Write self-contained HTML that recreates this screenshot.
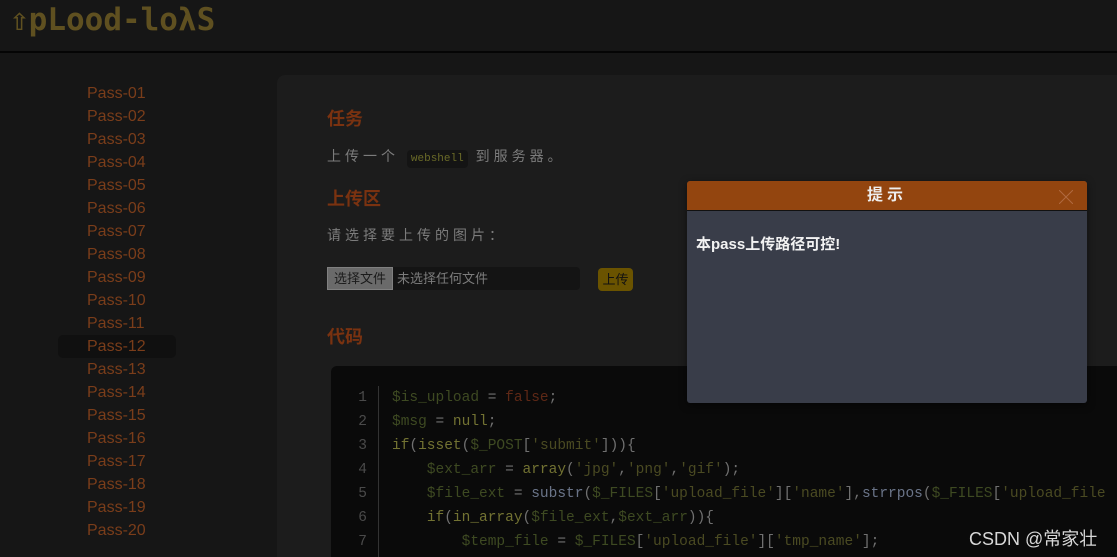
<!DOCTYPE html>
<html><head><meta charset="utf-8"><style>
*{margin:0;padding:0;box-sizing:border-box}
html,body{width:1117px;height:557px;overflow:hidden}
body{background:#161616;font-family:"Liberation Sans","Noto Sans CJK SC",sans-serif;position:relative}
.hdr{position:absolute;left:0;top:0;width:1117px;height:53px;background:#161616;border-bottom:2px solid #050505}
.logo{position:absolute;left:10px;top:2px;font:bold 31px "DejaVu Sans Mono",monospace;color:#5f5020;letter-spacing:0px}
.nav{position:absolute;left:58px;top:82px;width:118px}
.nav div{height:23px;line-height:23px;padding-left:29px;font-size:16px;color:#7a3d1a}
.nav div.on{background:#101010;border-radius:5px}
.main{position:absolute;left:277px;top:75px;width:850px;height:482px;background:#1c1c1c;border-radius:8px 0 0 0}
h3{position:absolute;left:327px;font-size:18px;font-weight:bold;color:#7a3210}
.t{position:absolute;left:327px;font-size:14px;color:#7c7c7c;letter-spacing:4px}
code.w{font:11px "Liberation Mono",monospace;color:#6a6a28;background:#141414;padding:3px 4px;border-radius:4px;letter-spacing:0}
.file{position:absolute;left:327px;top:267px;width:253px;height:23px;background:#141414;border-radius:4px;font-size:13px;color:#7c7c7c;line-height:23px}
.file span{display:inline-block;background:#6a6a6a;color:#1a1a1a;border:1px solid #808080;height:23px;line-height:21px;padding:0 6px;margin-right:4px;vertical-align:top}
.up{position:absolute;left:598px;top:268px;width:35px;height:23px;background:#6a5300;border-radius:4px;color:#111;font-size:13px;line-height:23px;text-align:center}
.code{position:absolute;left:331px;top:366px;width:800px;height:200px;background:#0a0a0a;border-radius:6px}
.ln{position:absolute;left:349px;top:386px;width:30px;border-right:1px solid #333;font:14.5px/24px "Liberation Mono",monospace;color:#4a4a4a;text-align:right;padding-right:11px;height:180px}
pre{position:absolute;left:392px;top:386px;font:14.5px/24px "Liberation Mono",monospace;color:#3e4a22;white-space:pre}
.k{color:#727232}.f{color:#5e2816}.s{color:#4a4a22}.p{color:#707070}.b{color:#6a7488}
.modal{position:absolute;left:687px;top:181px;width:400px;height:222px;background:#393d49;border-radius:3px;box-shadow:0 2px 8px rgba(0,0,0,.5);overflow:hidden}
.mh{height:30px;background:#93450f;border-bottom:1px solid #111;color:#eee;font-size:16px;text-align:center;line-height:30px;letter-spacing:4px;font-weight:bold}
.x{position:absolute;right:14px;top:9px;width:14px;height:14px}
.mb{padding:22px 9px;color:#f2f2f2;font-size:15px;font-weight:bold}
.wm{position:absolute;left:969px;top:525px;color:#d8d8d8;font-size:18px}
</style></head><body>
<div class="hdr"><div class="logo">⇧pLood-loλS</div></div>
<div class="nav">
<div>Pass-01</div><div>Pass-02</div><div>Pass-03</div><div>Pass-04</div><div>Pass-05</div><div>Pass-06</div><div>Pass-07</div><div>Pass-08</div><div>Pass-09</div><div>Pass-10</div><div>Pass-11</div><div class="on">Pass-12</div><div>Pass-13</div><div>Pass-14</div><div>Pass-15</div><div>Pass-16</div><div>Pass-17</div><div>Pass-18</div><div>Pass-19</div><div>Pass-20</div>
</div>
<div class="main"></div>
<h3 style="top:105px">任务</h3>
<div class="t" style="top:146px">上传一个 <code class="w">webshell</code> 到服务器。</div>
<h3 style="top:185px">上传区</h3>
<div class="t" style="top:225px">请选择要上传的图片：</div>
<div class="file"><span>选择文件</span>未选择任何文件</div>
<div class="up">上传</div>
<h3 style="top:323px">代码</h3>
<div class="code"></div>
<div class="ln">1<br>2<br>3<br>4<br>5<br>6<br>7</div>
<pre>$is_upload <span class="p">=</span> <span class="f">false</span><span class="p">;</span>
$msg <span class="p">=</span> <span class="k">null</span><span class="p">;</span>
<span class="k">if</span><span class="p">(</span><span class="k">isset</span><span class="p">(</span>$_POST<span class="p">[</span><span class="s">'submit'</span><span class="p">])){</span>
    $ext_arr <span class="p">=</span> <span class="k">array</span><span class="p">(</span><span class="s">'jpg'</span><span class="p">,</span><span class="s">'png'</span><span class="p">,</span><span class="s">'gif'</span><span class="p">);</span>
    $file_ext <span class="p">=</span> <span class="b">substr</span><span class="p">(</span>$_FILES<span class="p">[</span><span class="s">'upload_file'</span><span class="p">][</span><span class="s">'name'</span><span class="p">],</span><span class="b">strrpos</span><span class="p">(</span>$_FILES<span class="p">[</span><span class="s">'upload_file</span>
    <span class="k">if</span><span class="p">(</span><span class="k">in_array</span><span class="p">(</span>$file_ext<span class="p">,</span>$ext_arr<span class="p">)){</span>
        $temp_file <span class="p">=</span> $_FILES<span class="p">[</span><span class="s">'upload_file'</span><span class="p">][</span><span class="s">'tmp_name'</span><span class="p">];</span></pre>
<div class="modal"><div class="mh">提示</div>
<svg class="x" viewBox="0 0 14 14"><path d="M0 0L14 14M14 0L0 14" stroke="#b06a40" stroke-width="1"/></svg>
<div class="mb">本pass上传路径可控!</div></div>
<div class="wm">CSDN @常家壮</div>
</body></html>
